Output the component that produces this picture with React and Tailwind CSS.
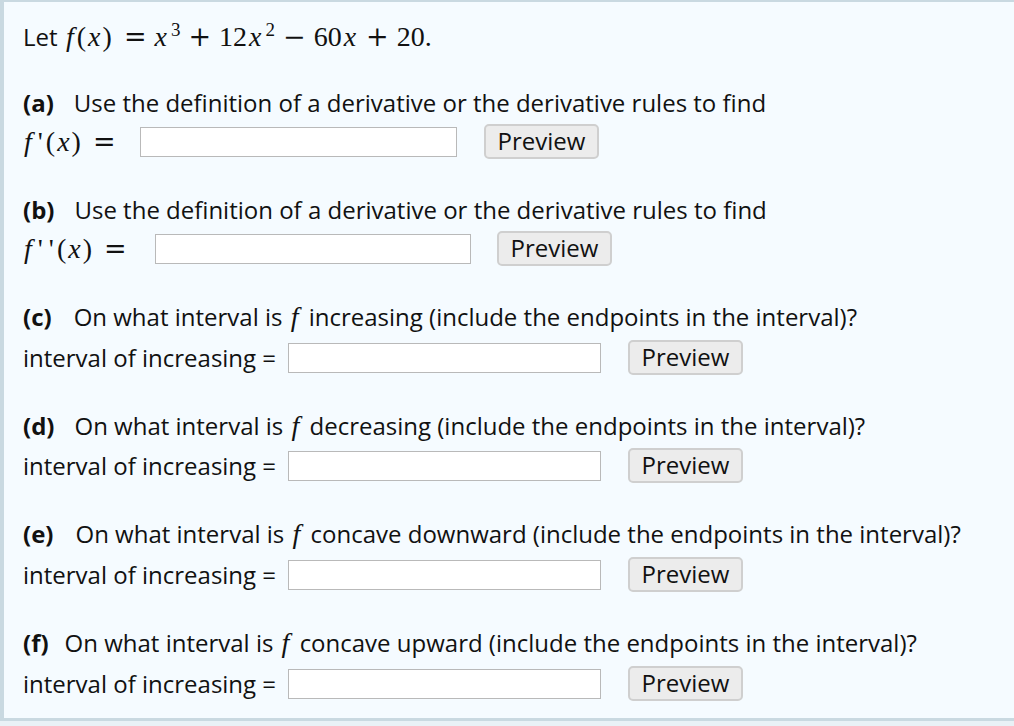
import React from "react";

const sans = { fontFamily: '"Open Sans", "Noto Sans", sans-serif' };

function F() {
  return <i className="italic ml-[1px] mr-[3px]">f</i>;
}
function X() {
  return <i className="italic mx-[2px]">x</i>;
}
function P() {
  return <span className="mx-[3px]">'</span>;
}
function Sup({ children }) {
  return <sup className="text-[19px] ml-[2px] relative -top-[10px]">{children}</sup>;
}
function Op({ children, className = "mx-[8px]" }) {
  return (
    <span className={"font-['DejaVu_Serif',serif] text-[27px] leading-none " + className}>{children}</span>
  );
}
function M({ children, className = "" }) {
  return (
    <span className={"inline-flex items-baseline whitespace-nowrap font-['Liberation_Serif',serif] text-[28px] leading-none " + className}>
      {children}
    </span>
  );
}

function Btn() {
  return (
    <button className="h-[35px] w-[115px] shrink-0 rounded-[5px] border-2 border-[#cfcfcf] bg-[#ececec] text-[24px] text-[#111] font-['Open_Sans',sans-serif] leading-none pb-[2px]">
      Preview
    </button>
  );
}

function Input({ w }) {
  return <div className="h-[30px] border border-[#b9b9b9] bg-white shrink-0" style={{ width: w }} />;
}

function Part({ letter, question, label, inputLeft, inputW, btnGap, rowGap = "mt-[7px]", gap = 20 }) {
  return (
    <div className="mt-[36px]">
      <div className="h-[30px] flex items-center whitespace-nowrap">
        <b className="font-bold">({letter})</b>
        <span style={{ marginLeft: gap }}>{question}</span>
      </div>
      <div className={"flex items-center h-[35px] " + rowGap}>
        <div className="flex items-center shrink-0" style={{ width: inputLeft }}>{label}</div>
        <Input w={inputW} />
        <div className="shrink-0" style={{ width: btnGap }} />
        <Btn />
      </div>
    </div>
  );
}

function Fi() {
  return (
    <span className="font-['Liberation_Serif',serif] text-[28px] italic ml-[2px] mr-[4px] leading-none">f</span>
  );
}

export default function App() {
  const intervalLabel = <span className="whitespace-nowrap">interval of increasing =</span>;
  return (
    <div className="w-[1014px] h-[726px] bg-[#e9f1f6] overflow-hidden" style={sans}>
      <div className="h-[721px] bg-[#f5fbff] border-l-[4px] border-t-2 border-b-[3px] border-[#c9d9e1] pl-[19px] pt-[20px] text-[24px] text-[#111]">
        <div className="h-[30px] flex items-center whitespace-nowrap">
          <span className="inline-block w-[42px]">Let</span>
          <M>
            <F />(<X />)
            <Op className="ml-[12px] mr-[6px]">=</Op>
            <X /><Sup>3</Sup>
            <Op>+</Op>
            12<X /><Sup>2</Sup>
            <Op>−</Op>
            60<X />
            <Op>+</Op>
            20.
          </M>
        </div>
        <div className="mt-[36px]">
          <div className="h-[30px] flex items-center whitespace-nowrap">
            <b className="font-bold">(a)</b>
            <span className="ml-[20px]">Use the definition of a derivative or the derivative rules to find</span>
          </div>
          <div className="flex items-center h-[35px] mt-[6px]">
            <div className="flex items-center shrink-0" style={{ width: 117 }}>
              <M>
                <F /><P />(<X />)
                <Op className="ml-[12px]">=</Op>
              </M>
            </div>
            <Input w={317} />
            <div className="shrink-0" style={{ width: 27 }} />
            <Btn />
          </div>
        </div>
        <Part
          letter="b"
          question="Use the definition of a derivative or the derivative rules to find"
          label={
            <M>
              <F /><P /><P />(<X />)
              <Op className="ml-[12px]">=</Op>
            </M>
          }
          inputLeft={132}
          inputW={316}
          btnGap={26}
          rowGap="mt-[6px]"
        />
        <Part
          letter="c"
          question={<>On what interval is <Fi /> increasing (include the endpoints in the interval)?</>}
          label={intervalLabel}
          inputLeft={265}
          inputW={313}
          btnGap={27}
          rowGap="mt-[8px]"
          gap={22}
        />
        <Part
          letter="d"
          question={<>On what interval is <Fi /> decreasing (include the endpoints in the interval)?</>}
          label={intervalLabel}
          inputLeft={265}
          inputW={313}
          btnGap={27}
          gap={20}
        />
        <Part
          letter="e"
          question={<>On what interval is <Fi /> concave downward (include the endpoints in the interval)?</>}
          label={intervalLabel}
          inputLeft={265}
          inputW={313}
          btnGap={27}
          rowGap="mt-[8px]"
          gap={22}
        />
        <Part
          letter="f"
          question={<>On what interval is <Fi /> concave upward (include the endpoints in the interval)?</>}
          label={intervalLabel}
          inputLeft={265}
          inputW={313}
          btnGap={27}
          rowGap="mt-[8px]"
          gap={16}
        />
      </div>
    </div>
  );
}
